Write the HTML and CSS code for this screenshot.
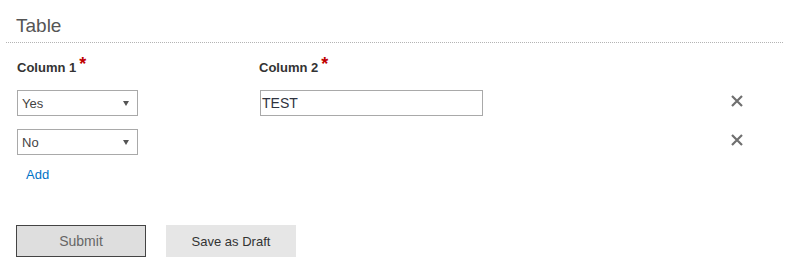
FILE: index.html
```html
<!DOCTYPE html>
<html>
<head>
<meta charset="utf-8">
<link rel="stylesheet" href="styles.css">
</head>
<body>
<div class="page">
  <div class="head"><h2 class="title">Table</h2></div>
  <div class="labels">
    <div class="label col1">Column 1<span class="req">*</span></div>
    <div class="label">Column 2<span class="req">*</span></div>
  </div>
  <div class="row">
    <div class="cell1"><div class="select"><span>Yes</span><i class="caret"></i></div></div>
    <div class="cell2"><div class="input">TEST</div></div>
    <div class="remove"><svg width="12" height="12" viewBox="0 0 12 12"><path d="M1 1L11 11M11 1L1 11" stroke="#6f6f6f" stroke-width="2.2"/></svg></div>
  </div>
  <div class="row row2">
    <div class="cell1"><div class="select"><span>No</span><i class="caret"></i></div></div>
    <div class="cell2"></div>
    <div class="remove"><svg width="12" height="12" viewBox="0 0 12 12"><path d="M1 1L11 11M11 1L1 11" stroke="#6f6f6f" stroke-width="2.2"/></svg></div>
  </div>
  <a class="add" href="#">Add</a>
  <div class="actions">
    <button class="btn submit">Submit</button>
    <button class="btn draft">Save as Draft</button>
  </div>
</div>
</body>
</html>
```
FILE: styles.css
```css
html, body {
  margin: 0;
  padding: 0;
  background: #fff;
}
body {
  font-family: "Liberation Sans", Arial, sans-serif;
  color: #333;
}
.page {
  width: 777px;
  padding-left: 6px;
}
.head {
  height: 43px;
  box-sizing: border-box;
  border-bottom: 1px dotted #b4b4b4;
  padding-left: 10px;
  padding-top: 15px;
}
.title {
  margin: 0;
  font-size: 19px;
  line-height: 22px;
  font-weight: normal;
  color: #555;
}
.labels {
  display: flex;
  margin-top: 17px;
  padding-left: 11px;
  height: 16px;
}
.label {
  font-size: 13px;
  line-height: 16px;
  font-weight: bold;
  color: #333;
}
.label.col1 {
  width: 242px;
}
.req {
  color: #c00000;
  font-size: 18px;
  font-weight: bold;
  position: relative;
  top: -2px;
  margin-left: 3px;
  line-height: 0;
}
.row {
  display: flex;
  align-items: flex-start;
  margin-top: 14px;
  padding-left: 11px;
  height: 26px;
}
.row2 {
  margin-top: 13px;
}
.cell1 {
  width: 243px;
}
.cell2 {
  width: 471px;
}
.select {
  width: 121px;
  height: 26px;
  box-sizing: border-box;
  border: 1px solid #a9a9a9;
  display: flex;
  align-items: center;
  justify-content: space-between;
  padding: 0 8px 0 4px;
  font-size: 13px;
  color: #444;
}
.caret {
  width: 0;
  height: 0;
  border-left: 3px solid transparent;
  border-right: 3px solid transparent;
  border-top: 5px solid #555;
  margin-top: 1px;
}
.input {
  width: 223px;
  height: 26px;
  box-sizing: border-box;
  border: 1px solid #a9a9a9;
  padding-left: 1px;
  font-size: 14px;
  line-height: 24px;
  color: #2f3340;
}
.remove {
  padding-top: 5px;
  height: 12px;
  line-height: 0;
}
.add {
  display: block;
  margin-top: 12px;
  padding-left: 20px;
  font-size: 13px;
  line-height: 16px;
  color: #0072c6;
  text-decoration: none;
  width: max-content;
}
.actions {
  display: flex;
  gap: 20px;
  margin-top: 42px;
  padding-left: 10px;
}
.btn {
  width: 130px;
  height: 32px;
  box-sizing: border-box;
  font-family: "Liberation Sans", Arial, sans-serif;
  margin: 0;
  padding: 0;
  cursor: pointer;
}
.submit {
  background: #dedede;
  border: 1px solid #444;
  color: #666;
  font-size: 14px;
}
.draft {
  background: #e6e6e6;
  border: none;
  color: #333;
  font-size: 13px;
}
```
